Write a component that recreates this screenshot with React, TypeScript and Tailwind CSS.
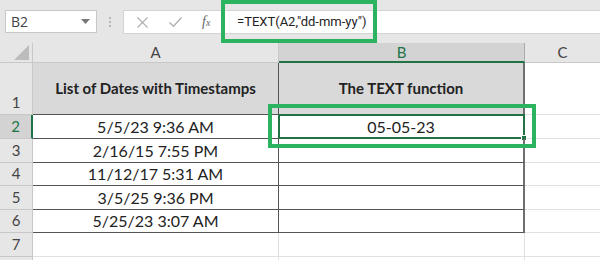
import React from 'react';

const rows = [
    { n: 1, a: 'List of Dates with Timestamps', b: 'The TEXT function', head: true },
    { n: 2, a: '5/5/23 9:36 AM', b: '05-05-23' },
    { n: 3, a: '2/16/15 7:55 PM', b: '' },
    { n: 4, a: '11/12/17 5:31 AM', b: '' },
    { n: 5, a: '3/5/25 9:36 PM', b: '' },
    { n: 6, a: '5/25/23 3:07 AM', b: '' },
];

const FormulaBar = () => (
    <div className="h-[43px] bg-[#e6e6e6] pt-[10px] flex items-start shrink-0">
        <div className="ml-[5px] w-[92px] h-[23px] bg-white border border-[#c8c8c8] flex items-center justify-between pl-[5px] pr-[6px] shrink-0">
            <span className="text-[14px] text-[#444] font-['Open_Sans',sans-serif]">B2</span>
            <svg width="9" height="5" viewBox="0 0 9 5"><path d="M0 0h9L4.5 5z" fill="#777" /></svg>
        </div>
        <div className="w-[26px] h-[23px] flex flex-col items-center justify-center gap-[2px] shrink-0">
            <span className="w-[2px] h-[2px] bg-[#b5b5b5]" />
            <span className="w-[2px] h-[2px] bg-[#b5b5b5]" />
            <span className="w-[2px] h-[2px] bg-[#b5b5b5]" />
        </div>
        <div className="flex-1 h-[24px] bg-white border border-[#d4d4d4] border-r-0 flex items-center">
            <div className="w-[113px] shrink-0 flex items-center">
                <svg className="ml-[13px]" width="11" height="11" viewBox="0 0 11 11">
                    <path d="M0.5 0.5l10 10M10.5 0.5l-10 10" stroke="#b0b0b0" strokeWidth="1.2" fill="none" />
                </svg>
                <svg className="ml-[21px]" width="13" height="10" viewBox="0 0 13 10">
                    <path d="M0.5 5.5l4 3.8L12.5 0.5" stroke="#b0b0b0" strokeWidth="1.3" fill="none" />
                </svg>
                <span className="ml-[20px] text-[14px] italic text-[#666] font-['Liberation_Serif',serif] leading-none">
                    f<span className="text-[10px]">x</span>
                </span>
            </div>
            <span className="whitespace-nowrap text-[13px] text-[#222] font-['Roboto',sans-serif]">=TEXT(A2,"dd-mm-yy")</span>
        </div>
    </div>
);

export default function App() {
    return (
        <div className="w-[600px] h-[260px] overflow-hidden bg-white relative flex flex-col font-['Lato',sans-serif]">
            <FormulaBar />

            <div className="grid grid-cols-[33px_246px_246px_1fr] grid-rows-[20px_52px_24px_24px_23px_24px_23px_24px_24px]">
                {/* column headers */}
                <div className="bg-[#e6e6e6] border-r border-b border-[#c8c8c8] flex items-end justify-end pr-[3px] pb-[2px]">
                    <svg width="15" height="15" viewBox="0 0 15 15"><path d="M15 0V15H0z" fill="#bcbcbc" /></svg>
                </div>
                <div className="bg-[#e6e6e6] border-r border-b border-[#c8c8c8] flex items-center justify-center text-[15px] text-[#444]">A</div>
                <div className="bg-[#d3d3d3] border-r border-[#ababab] border-b-2 border-b-[#217346] flex items-center justify-center text-[15px] text-[#217346]">B</div>
                <div className="bg-[#e6e6e6] border-b border-[#c8c8c8] flex items-center justify-center text-[15px] text-[#444]">C</div>

                {rows.map((r) => (
                    <React.Fragment key={r.n}>
                        <div className={`border-r border-b flex items-end justify-center pb-[1px] text-[15px] ${r.n === 2 ? 'bg-[#d3d3d3] text-[#217346] border-r-2 border-r-[#217346] border-b-[#c8c8c8]' : 'bg-[#e6e6e6] text-[#444] border-[#c8c8c8]'}`}>
                            {r.n}
                        </div>
                        <div className={`border-r border-b border-[#555] flex items-center justify-center text-[#222] ${r.head ? 'bg-[#d9d9d9] font-bold text-[#111] text-[15px]' : 'text-[16px]'}`}>
                            {r.a}
                        </div>
                        <div className={`relative border-r-2 border-r-[#707070] border-b border-b-[#555] flex items-center justify-center text-[#222] ${r.head ? 'bg-[#d9d9d9] font-bold text-[#111] text-[15px]' : 'text-[16px]'}`}>
                            {r.b}
                            {r.n === 2 && (
                                <div className="absolute -left-px -top-px -right-[2px] -bottom-px border-2 border-[#217346]">
                                    <div className="absolute -right-[4px] -bottom-[4px] w-[6px] h-[6px] bg-[#217346] border border-white" />
                                </div>
                            )}
                        </div>
                        <div className="border-b border-[#e1e1e1]" />
                    </React.Fragment>
                ))}

                {[7, 8].map((n) => (
                    <React.Fragment key={n}>
                        <div className="bg-[#e6e6e6] border-r border-b border-[#c8c8c8] flex items-end justify-center pb-[1px] text-[15px] text-[#444]">{n === 7 ? n : ''}</div>
                        <div className="border-r border-b border-[#e1e1e1]" />
                        <div className="border-r border-b border-[#e1e1e1]" />
                        <div className="border-b border-[#e1e1e1]" />
                    </React.Fragment>
                ))}
            </div>

            {/* callout boxes */}
            <div className="absolute left-[221px] top-0 w-[156px] h-[43px] border-4 border-[#2bb35f]" />
            <div className="absolute left-[268px] top-[104px] w-[268px] h-[44px] border-4 border-[#2bb35f]" />
        </div>
    );
}
